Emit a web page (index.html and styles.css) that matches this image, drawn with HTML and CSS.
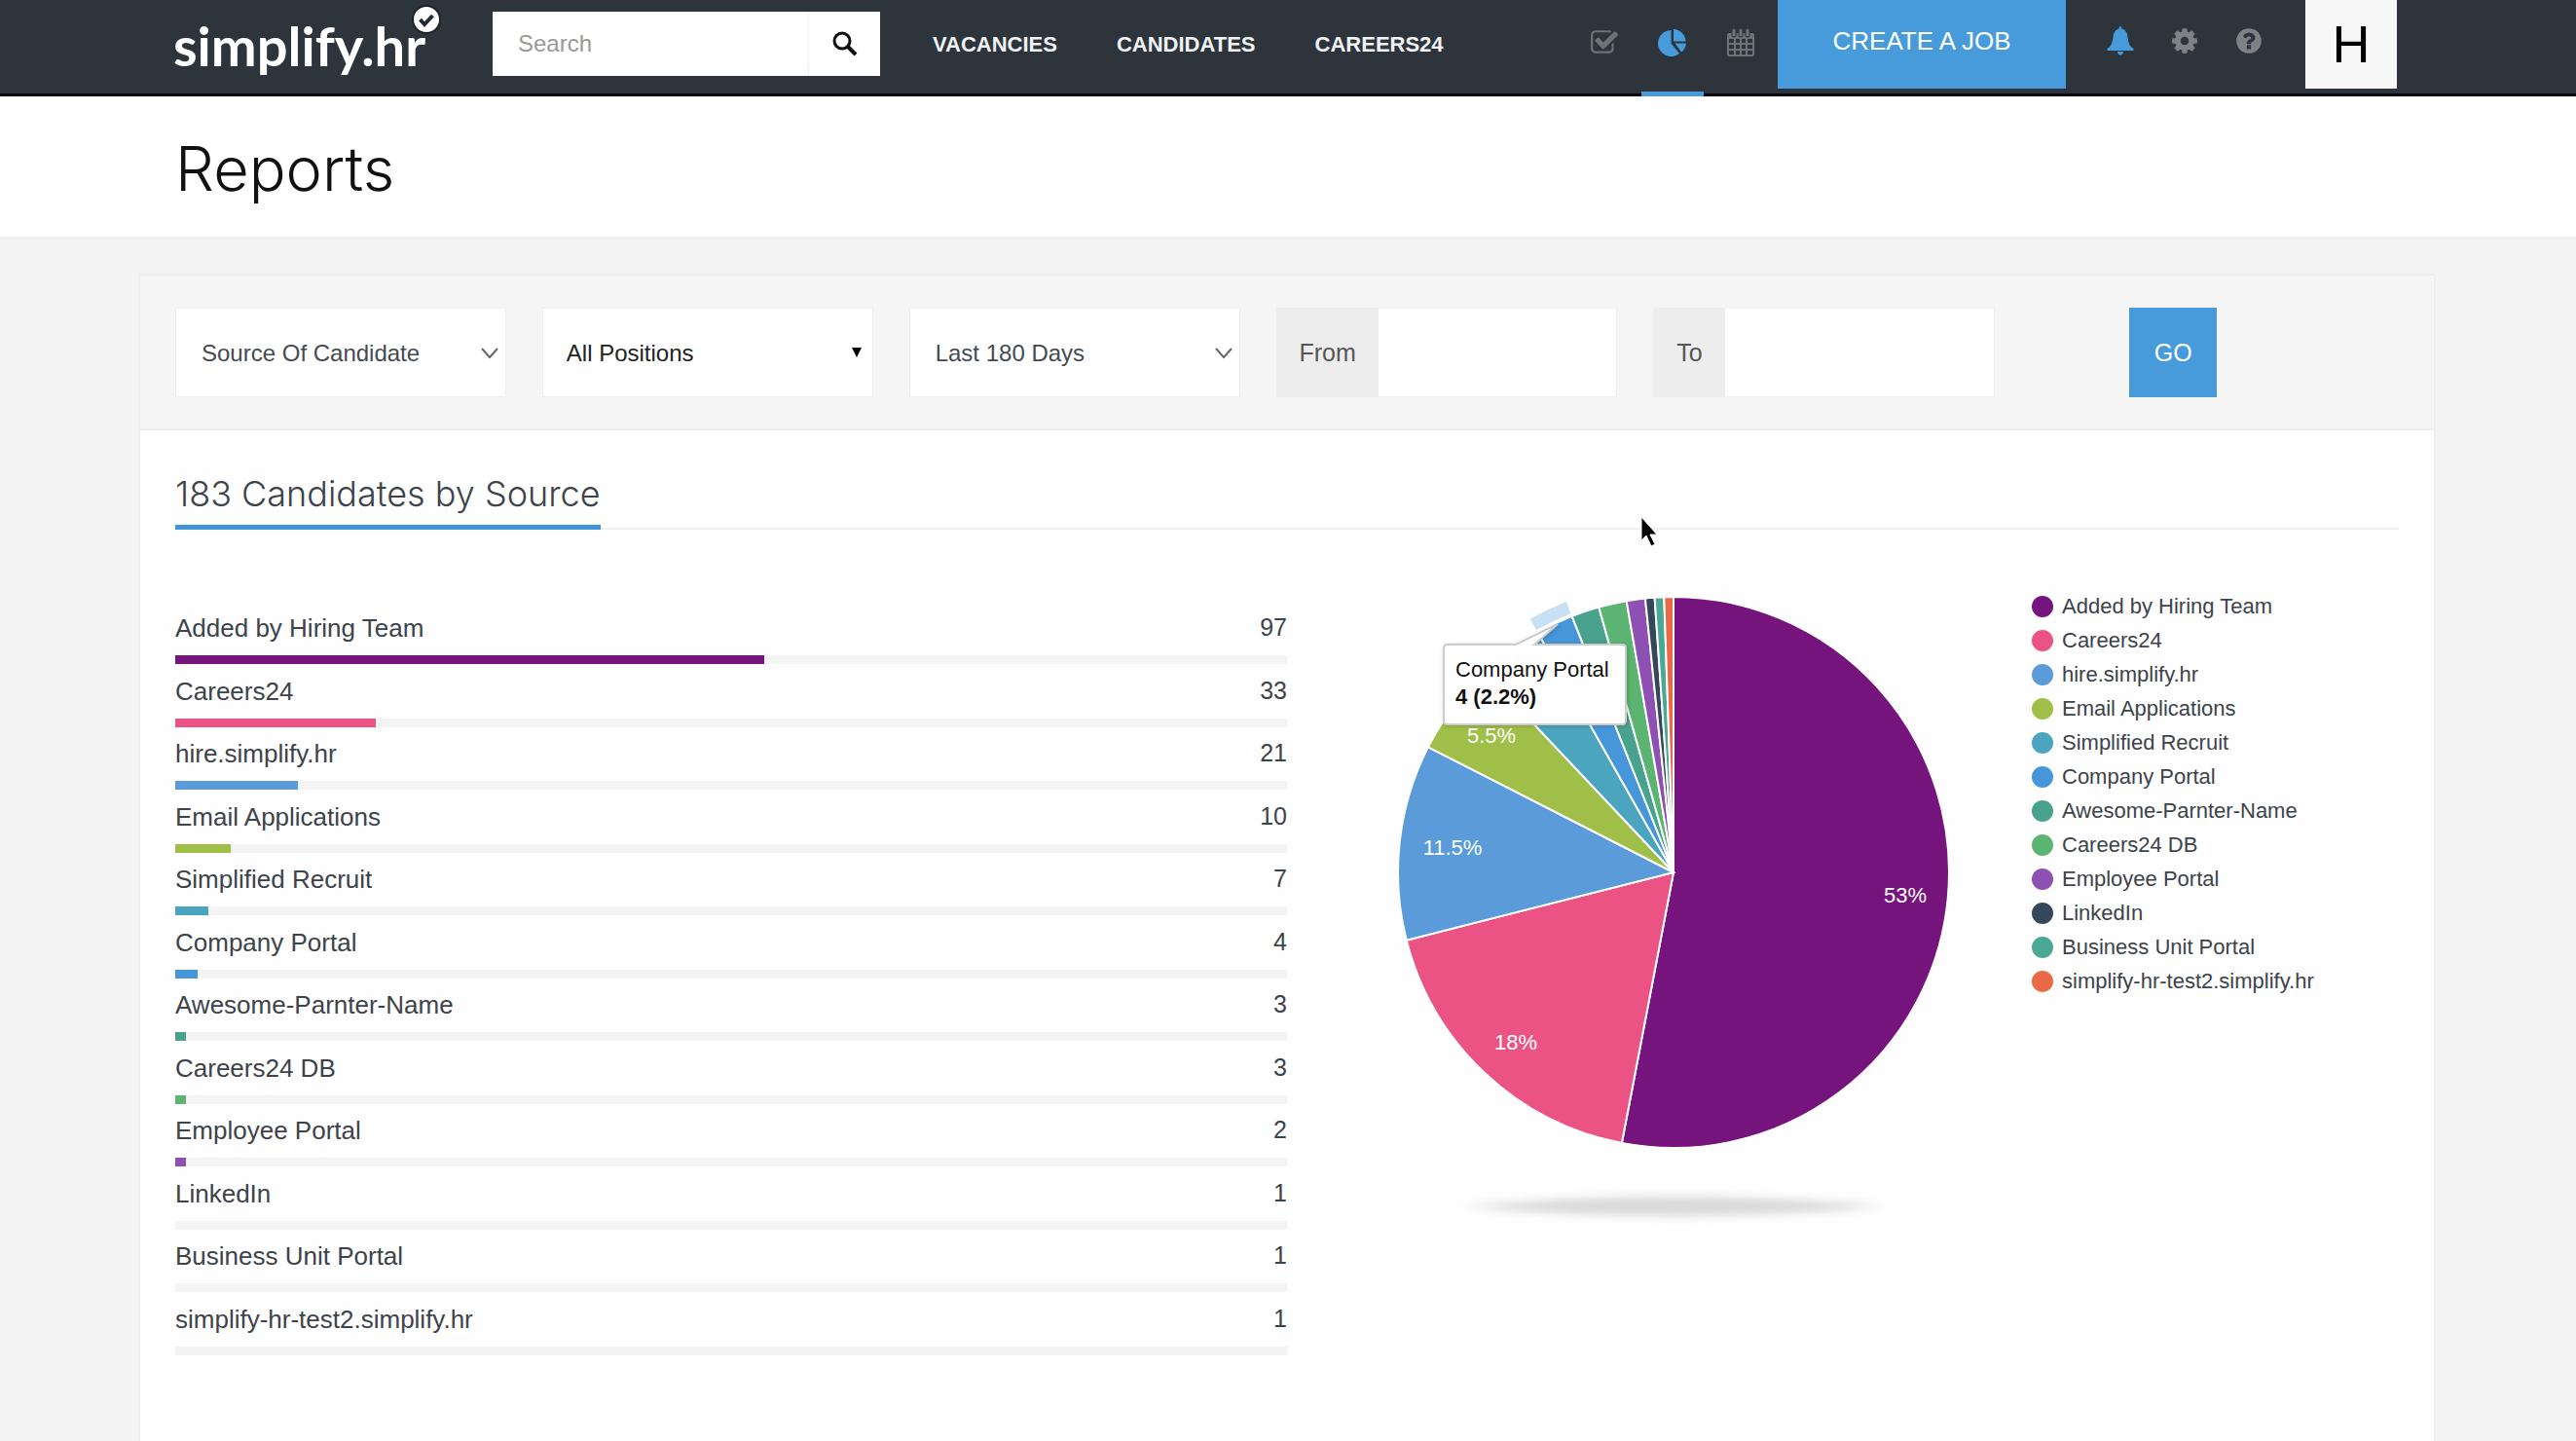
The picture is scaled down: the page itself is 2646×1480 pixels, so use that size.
FILE: index.html
```html
<!DOCTYPE html>
<html lang="en">
<head>
    <meta charset="UTF-8">
    <meta name="viewport" content="width=device-width, initial-scale=1.0">
    <title>Reports - simplify.hr</title>
    <link rel="stylesheet" href="styles.css">
</head>
<body>
    <header class="navbar">
        <a href="#" class="logo">simplify.hr
            <svg class="logo-badge" viewBox="0 0 32 32" aria-hidden="true">
                <circle cx="16" cy="16" r="14" fill="#fff" stroke="#1b222a" stroke-width="2"/>
                <path d="M9.500 16l4.500 5 8.500-9" fill="none" stroke="#222a32" stroke-width="4"/>
            </svg>
        </a>

        <form class="search">
            <input type="text" class="search-input" placeholder="Search" aria-label="Search">
            <button type="button" class="search-button" aria-label="Search">
                <svg class="search-icon" viewBox="0 0 26 26"><circle cx="10" cy="10" r="8" fill="none" stroke="currentColor" stroke-width="3"/><path d="M16 16l8 8" stroke="currentColor" stroke-width="4"/></svg>
            </button>
        </form>

        <nav class="nav-links">
            <a href="#">VACANCIES</a>
            <a href="#">CANDIDATES</a>
            <a href="#">CAREERS24</a>
        </nav>

        <div class="nav-right">
            <a href="#" class="nav-icon" aria-label="Tasks">
                <svg class="icon" viewBox="0 0 1792 1792"><path fill="currentColor" d="M1472 930v318q0 119-84.500 203.500t-203.500 84.500h-832q-119 0-203.500-84.500t-84.500-203.500v-832q0-119 84.500-203.500t203.500-84.500h832q63 0 117 25 15 7 18 23 3 17-9 29l-49 49q-10 10-23 10-3 0-9-2-23-6-45-6h-832q-66 0-113 47t-47 113v832q0 66 47 113t113 47h832q66 0 113-47t47-113v-254q0-13 9-22l64-64q10-10 23-10 6 0 12 3 20 8 20 29zm231-489l-814 814q-24 24-57 24t-57-24l-430-430q-24-24-24-57t24-57l110-110q24-24 57-24t57 24l263 263 647-647q24-24 57-24t57 24l110 110q24 24 24 57t-24 57z"/></svg>
            </a>
            <a href="#" class="nav-icon active" aria-label="Reports">
                <svg class="icon" viewBox="0 0 30 30">
                    <path fill="currentColor" d="M13.500 2v13.500l8.500 10.500A13.500 13.500 0 1 1 13.500 2z"/>
                    <path fill="currentColor" d="M16 1a13 13 0 0 1 12.500 12.500H16z"/>
                    <path fill="currentColor" d="M17.500 15.500H29a13 13 0 0 1-5 9z"/>
                </svg>
            </a>
            <a href="#" class="nav-icon" aria-label="Calendar">
                <svg class="icon" viewBox="0 0 30 30">
                    <path fill="currentColor" fill-rule="evenodd" d="M3 5h24q2 0 2 2v20q0 2-2 2H3q-2 0-2-2V7q0-2 2-2zM3 11v4h5v-4zM10 11v4h4v-4zM16 11v4h4v-4zM22 11v4h5v-4zM3 17v4h5v-4zM10 17v4h4v-4zM16 17v4h4v-4zM22 17v4h5v-4zM3 23v4h5v-4zM10 23v4h4v-4zM16 23v4h4v-4zM22 23v4h5v-4z"/>
                    <path d="M8 3v4M22 3v4M15 3v4" stroke="#2d343c" stroke-width="5" stroke-linecap="round"/>
                    <path d="M8 2v5M22 2v5M15 2v5" stroke="currentColor" stroke-width="3" stroke-linecap="round"/>
                </svg>
            </a>
            <button type="button" class="create-job">CREATE A JOB</button>
            <a href="#" class="tool-icon bell" aria-label="Notifications">
                <svg class="icon" viewBox="0 0 30 30"><path fill="currentColor" d="M15 0q1.500 0 1.500 2.500Q22 4 22.500 11q.5 9 6 12v2h-27v-2q5.500-3 6-12Q8 4 13.500 2.500 13.500 0 15 0zM12 26h6q-.5 3.500-3 3.500T12 26z"/></svg>
            </a>
            <a href="#" class="tool-icon" aria-label="Settings">
                <svg class="icon" viewBox="0 0 1792 1792"><path fill="currentColor" d="M1152 896q0-106-75-181t-181-75-181 75-75 181 75 181 181 75 181-75 75-181zm512-109v222q0 12-8 23t-20 13l-185 28q-19 54-39 91 35 50 107 138 10 12 10 25t-9 23q-27 37-99 108t-94 71q-12 0-26-9l-138-108q-44 23-91 38-16 136-29 186-7 28-36 28h-222q-14 0-24.500-8.500t-11.500-21.500l-28-184q-49-16-90-37l-141 107q-10 9-25 9-14 0-25-11-126-114-165-168-7-10-7-23 0-12 8-23 15-21 51-66.500t54-70.500q-27-50-41-99l-183-27q-13-2-21-12.500t-8-23.500v-222q0-12 8-23t19-13l186-28q14-46 39-92-40-57-107-138-10-12-10-24 0-10 9-23 26-36 98.500-107.500t94.500-71.500q13 0 26 10l138 107q44-23 91-38 16-136 29-186 7-28 36-28h222q14 0 24.500 8.500t11.500 21.500l28 184q49 16 90 37l142-107q9-9 24-9 13 0 25 10 129 119 165 170 7 8 7 22 0 12-8 23-15 21-51 66.500t-54 70.500q26 50 41 98l183 28q13 2 21 12.500t8 23.500z"/></svg>
            </a>
            <a href="#" class="tool-icon" aria-label="Help">
                <svg class="icon" viewBox="0 0 1792 1792"><path fill="currentColor" d="M1024 1376v-192q0-14-9-23t-23-9h-192q-14 0-23 9t-9 23v192q0 14 9 23t23 9h192q14 0 23-9t9-23zm256-672q0-88-55.500-163t-138.500-116-170-41q-243 0-371 213-15 24 8 42l132 100q7 6 19 6 16 0 25-12 53-68 86-92 34-24 86-24 48 0 85.500 26t37.500 59q0 38-20 61t-68 45q-63 28-115.500 86.500t-52.500 125.500v36q0 14 9 23t23 9h192q14 0 23-9t9-23q0-19 21.500-49.500t54.500-49.500q32-18 49-28.500t46-35 44.500-48 28-60.500 12.500-81zm384 192q0 209-103 385.500t-279.500 279.500-385.500 103-385.500-103-279.500-279.500-103-385.500 103-385.500 279.500-279.500 385.500-103 385.500 103 279.500 279.500 103 385.500z"/></svg>
            </a>
            <a href="#" class="avatar">H</a>
        </div>
    </header>

    <div class="page-title">
        <h1>Reports</h1>
    </div>

    <main class="panel">
        <form class="filters">
            <div class="select-box">
                <select aria-label="Report type">
                    <option>Source Of Candidate</option>
                </select>
                <svg class="caret" viewBox="0 0 20 20"><path d="M2 6l8 9 8-9" fill="none" stroke="#666" stroke-width="2"/></svg>
            </div>
            <div class="select-box">
                <select class="dark" aria-label="Positions">
                    <option>All Positions</option>
                </select>
                <svg class="caret" viewBox="0 0 20 20"><path d="M5 5h10l-5 10z" fill="#000"/></svg>
            </div>
            <div class="select-box">
                <select aria-label="Period">
                    <option>Last 180 Days</option>
                </select>
                <svg class="caret" viewBox="0 0 20 20"><path d="M2 6l8 9 8-9" fill="none" stroke="#666" stroke-width="2"/></svg>
            </div>
            <div class="date-box">
                <label for="from">From</label>
                <input type="text" id="from">
            </div>
            <div class="date-box">
                <label for="to">To</label>
                <input type="text" id="to">
            </div>
            <button type="button" class="go">GO</button>
        </form>

        <section class="report">
            <div class="report-heading">
                <h2>183 Candidates by Source</h2>
            </div>
            <div class="report-body">
                <ul class="source-list" id="sources"></ul>
                <div class="chart">
                    <svg class="pie" viewBox="0 0 640 680" role="img" aria-label="Candidates by source">
                        <defs>
                            <filter id="soft" x="-10%" y="-200%" width="120%" height="500%">
                                <feGaussianBlur stdDeviation="6 5"/>
                            </filter>
                            <filter id="drop" x="-10%" y="-10%" width="125%" height="130%">
                                <feDropShadow dx="1" dy="1" stdDeviation="2" flood-color="#000" flood-opacity="0.200"/>
                            </filter>
                        </defs>
                        <path d="M104 646Q320 626 536 646Q320 666 104 646z" fill="#d9d9d9" filter="url(#soft)"/>
                        <g id="slices"></g>
                        <g class="tooltip">
                            <path d="M88 69h70l43-21-24 21h90q4 0 4 4v74q0 4-4 4H88q-4 0-4-4V73q0-4 4-4z" fill="#fff" stroke="#ccc" stroke-width="2" filter="url(#drop)"/>
                            <text x="96" y="102">Company Portal</text>
                            <text x="96" y="130" font-weight="bold">4 (2.2%)</text>
                        </g>
                    </svg>
                    <ul class="legend" id="legend"></ul>
                </div>
            </div>
            <svg class="cursor" viewBox="0 0 20 32" aria-hidden="true">
                <path d="M2 1v24l5-5 5 11 4-2-5-10h7z" fill="#000" stroke="#fff" stroke-width="1"/>
            </svg>
        </section>
    </main>

    <script src="script.js"></script>
</body>
</html>
```
FILE: styles.css
```css
* {
    box-sizing: border-box;
}
body {
    margin: 0;
    min-height: 100vh;
    display: flex;
    flex-direction: column;
    background-color: #f4f4f4;
    font-family: "Liberation Sans", Arial, sans-serif;
    font-size: 24px;
    color: #3d434b;
}
a {
    color: inherit;
    text-decoration: none;
}
ul {
    list-style: none;
    margin: 0;
    padding: 0;
}
button,
input,
select {
    font-family: inherit;
    border: none;
    border-radius: 0;
}
button {
    cursor: pointer;
    padding: 0;
}

/* top bar */
.navbar {
    display: flex;
    align-items: flex-start;
    height: 99px;
    padding: 0 184px 0 178px;
    background-color: #2d343c;
    border-bottom: 3px solid #05070c;
}
.logo {
    position: relative;
    width: 328px;
    padding-top: 12px;
    font-family: Lato, "Open Sans", sans-serif;
    font-size: 56px;
    font-weight: 700;
    line-height: 70px;
    color: #fff;
}
.logo-badge {
    position: absolute;
    top: 4px;
    left: 244px;
    width: 32px;
    height: 32px;
}
.search {
    display: flex;
    width: 398px;
    height: 66px;
    margin-top: 12px;
    background-color: #fff;
}
.search-input {
    flex: 1;
    min-width: 0;
    padding: 0 26px;
    font-size: 24px;
    background: none;
}
.search-input::placeholder {
    color: #999;
}
.search-button {
    width: 74px;
    background: none;
    border-left: 1px solid #eee;
    color: #111;
}
.search-icon {
    display: block;
    width: 26px;
    height: 26px;
    margin: 0 auto;
}
.nav-links {
    display: flex;
    gap: 61px;
    margin-left: 54px;
    font-size: 22px;
    font-weight: bold;
    line-height: 92px;
    color: #f0f2f4;
}
.nav-right {
    display: flex;
    margin-left: auto;
}
.icon {
    display: block;
    width: 30px;
    height: 30px;
}
.nav-icon {
    display: flex;
    justify-content: center;
    width: 64px;
    height: 99px;
    margin-right: 6px;
    padding-top: 29px;
    color: #6f7277;
}
.nav-icon.active {
    color: #489bda;
    border-bottom: 5px solid #489bda;
}
.create-job {
    width: 296px;
    height: 91px;
    margin-right: 23px;
    padding-bottom: 6px;
    font-size: 26px;
    background-color: #489bda;
    color: #fff;
}
.tool-icon {
    display: flex;
    justify-content: center;
    width: 66px;
    padding-top: 27px;
    color: #808185;
}
.tool-icon.bell {
    color: #489bda;
}
.avatar {
    width: 94px;
    height: 91px;
    margin-left: 25px;
    background-color: #f6f6f6;
    color: #000;
    font-size: 54px;
    line-height: 91px;
    text-align: center;
}

/* title */
.page-title {
    padding: 38px 180px 34px;
    background-color: #fff;
    border-bottom: 3px solid #eee;
}
h1,
h2 {
    font-family: Inter, "Liberation Sans", sans-serif;
    font-weight: 300;
}
h1 {
    margin: 0;
    font-size: 63px;
    line-height: 72px;
    color: #111;
}

/* panel */
.panel {
    flex: 1;
    margin: 35px 144px 0 142px;
    border: 2px solid #eee;
    border-bottom: none;
    background-color: #fefefe;
}
.filters {
    display: grid;
    grid-template-columns: 340fr 340fr 340fr 351fr 351fr 378fr;
    gap: 37px;
    padding: 33px 36px 32px;
    background-color: #f5f5f5;
    border-bottom: 2px solid #eee;
}
.select-box {
    position: relative;
    min-width: 0;
}
select {
    width: 100%;
    height: 92px;
    padding: 0 26px;
    appearance: none;
    background-color: #fff;
    border: 1px solid #eee;
    color: #444a52;
    font-size: 24px;
}
select.dark {
    color: #222;
    padding: 0 24px;
}
.caret {
    position: absolute;
    top: 36px;
    right: 7px;
    width: 20px;
    height: 20px;
    pointer-events: none;
}
.date-box {
    display: flex;
    min-width: 0;
    height: 92px;
    border: 1px solid #eee;
    background-color: #fff;
}
.date-box label {
    padding: 0 23px;
    background-color: #ededed;
    color: #555;
    font-size: 25px;
    line-height: 90px;
}
.date-box input {
    flex: 1;
    width: 0;
    min-width: 0;
    background: none;
    font-size: 24px;
}
.go {
    width: 90px;
    height: 92px;
    margin-left: 101px;
    background-color: #489bda;
    color: #fff;
    font-size: 25px;
}

/* report */
.report {
    position: relative;
    padding: 38px 36px;
}
.report-heading {
    border-bottom: 2px solid #f0f0f0;
}
h2 {
    display: inline-block;
    margin: 0 0 -2px;
    padding-bottom: 5px;
    border-bottom: 5px solid #3f93d6;
    font-size: 36px;
    line-height: 54px;
}
.report-body {
    display: grid;
    grid-template-columns: 1fr 1fr;
    padding-top: 49px;
}
.source-list {
    padding-top: 32px;
}
.source-list li {
    margin-bottom: 8px;
}
.source-list li:nth-child(even) {
    margin-bottom: 7px;
}
.source-row {
    display: flex;
    justify-content: space-between;
    padding-bottom: 8px;
    font-size: 26px;
    line-height: 40px;
}
.count {
    font-size: 25px;
    line-height: 38px;
}
.track {
    height: 9px;
    background-color: #f4f4f4;
}
.bar {
    height: 9px;
}
.chart {
    display: flex;
    align-items: flex-start;
    gap: 48px;
    padding-left: 77px;
}
.pie {
    flex: none;
    width: 640px;
    height: 680px;
    font-size: 22px;
}
.slice {
    stroke: #fff;
    stroke-width: 2;
}
.slice-label {
    fill: #fff;
    text-anchor: middle;
}
.tooltip text {
    fill: #111;
}
.legend {
    padding-top: 12px;
    font-size: 22px;
    line-height: 35px;
    white-space: nowrap;
}
.legend li {
    display: flex;
    align-items: center;
    gap: 9px;
}
.dot {
    width: 22px;
    height: 22px;
    border-radius: 50%;
}
.cursor {
    position: absolute;
    top: 88px;
    left: 1540px;
    width: 20px;
    height: 32px;
}
```
FILE: script.js
```js
var sources = [
    { name: 'Added by Hiring Team', count: 97, color: '#76147d', label: '53%', x: 558, y: 334 },
    { name: 'Careers24', count: 33, color: '#eb5384', label: '18%', x: 158, y: 485 },
    { name: 'hire.simplify.hr', count: 21, color: '#5b9bd9', label: '11.5%', x: 93, y: 285 },
    { name: 'Email Applications', count: 10, color: '#9fbf48', label: '5.5%', x: 133, y: 170 },
    { name: 'Simplified Recruit', count: 7, color: '#4ca5bf' },
    { name: 'Company Portal', count: 4, color: '#4597da', hover: true },
    { name: 'Awesome-Parnter-Name', count: 3, color: '#49a28d' },
    { name: 'Careers24 DB', count: 3, color: '#5bb472' },
    { name: 'Employee Portal', count: 2, color: '#8e50b3' },
    { name: 'LinkedIn', count: 1, color: '#34475b' },
    { name: 'Business Unit Portal', count: 1, color: '#4ca896' },
    { name: 'simplify-hr-test2.simplify.hr', count: 1, color: '#ea6a48' }
];

var total = 183;
var cx = 320, cy = 303, radius = 283;

function point(value, r) {
    var angle = value / total * 2 * Math.PI;
    return (cx + r * Math.sin(angle)).toFixed(2) + ' ' + (cy - r * Math.cos(angle)).toFixed(2);
}

var list = '', legend = '', slices = '', labels = '';
var start = 0;

sources.forEach(function (s) {
    var end = start + s.count;
    var percent = Math.floor(s.count / total * 100);
    var large = s.count > total / 2 ? 1 : 0;
    // single candidates get no bar
    if (s.count === 1) {
        percent = 0;
    }

    list += '<li><div class="source-row"><span>' + s.name + '</span><span class="count">' + s.count + '</span></div>' +
        '<div class="track"><div class="bar" style="width: ' + percent + '%; background-color: ' + s.color + '"></div></div></li>';

    legend += '<li><span class="dot" style="background-color: ' + s.color + '"></span>' + s.name + '</li>';

    slices += '<path class="slice" fill="' + s.color + '" d="M' + cx + ' ' + cy + 'L' + point(start, radius) +
        'A' + radius + ' ' + radius + ' 0 ' + large + ' 1 ' + point(end, radius) + 'z"/>';

    // outer ring on the hovered slice
    if (s.hover) {
        slices += '<path fill="#c8e0f4" d="M' + point(start, 286) + 'A286 286 0 0 1 ' + point(end, 286) +
            'L' + point(end, 299) + 'A299 299 0 0 0 ' + point(start, 299) + 'z"/>';
    }
    if (s.label) {
        labels += '<text class="slice-label" x="' + s.x + '" y="' + s.y + '">' + s.label + '</text>';
    }
    start = end;
});

document.getElementById('sources').innerHTML = list;
document.getElementById('legend').innerHTML = legend;
document.getElementById('slices').innerHTML = slices + labels;
```
